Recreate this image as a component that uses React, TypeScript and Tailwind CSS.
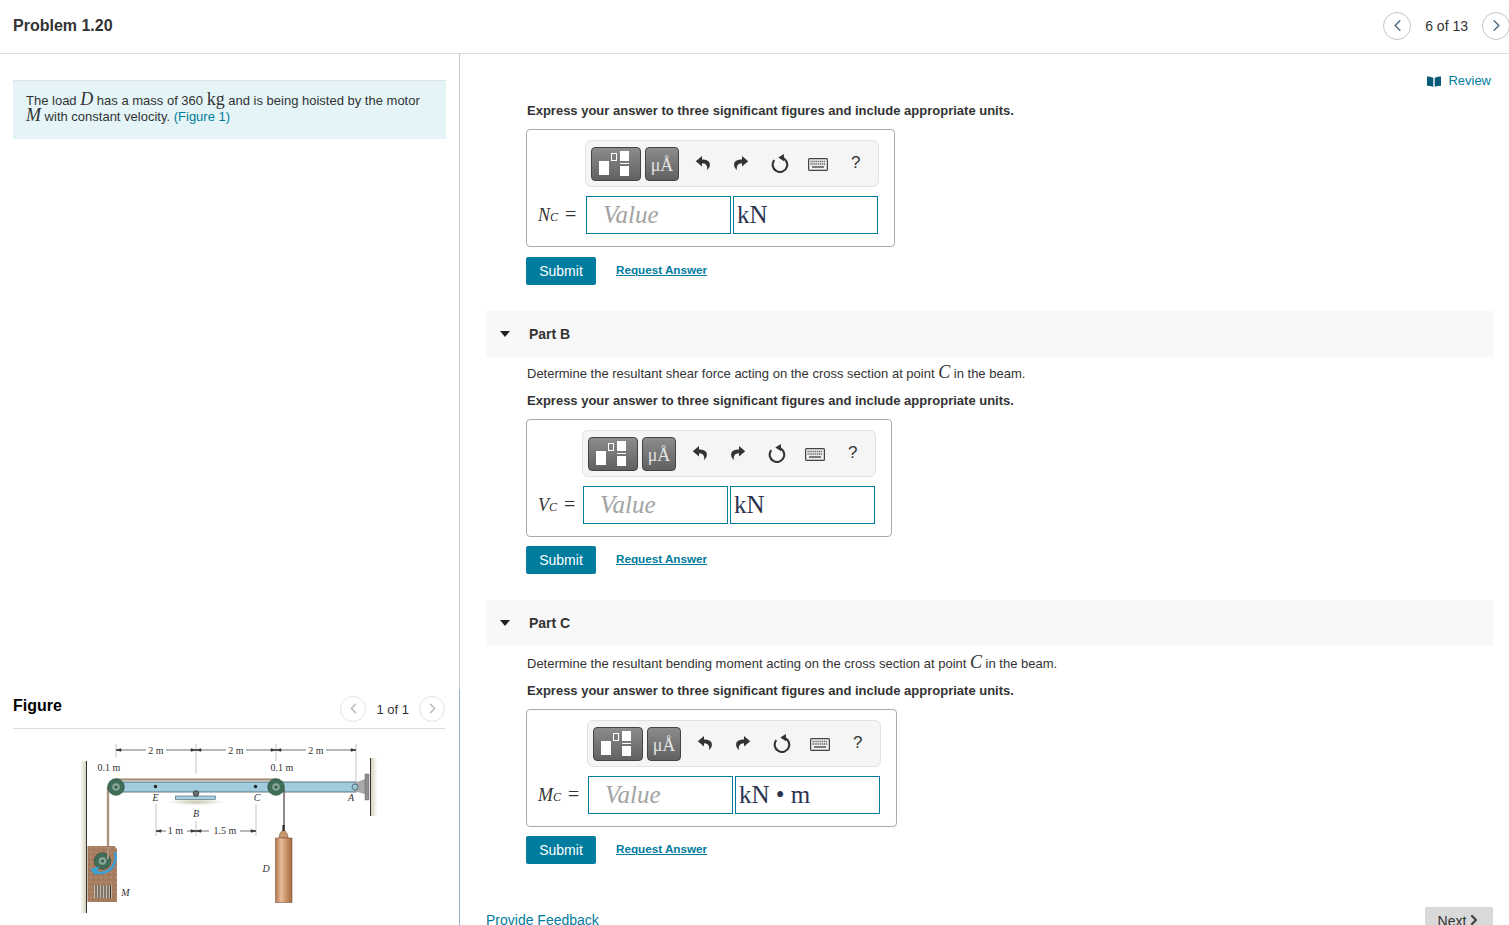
import { ChevronLeft, ChevronRight } from "lucide-react";

const serif = "font-['Liberation_Serif',serif]";

function CircleNav({ dir, faint }: { dir: "left" | "right"; faint?: boolean }) {
  const Icon = dir === "left" ? ChevronLeft : ChevronRight;
  if (faint) {
    return (
      <span className="flex h-[26px] w-[26px] shrink-0 items-center justify-center rounded-full border border-[#e3e3e3] bg-white text-[#b5b5b5]">
        <Icon size={17} strokeWidth={1.8} />
      </span>
    );
  }
  return (
    <span className="flex h-[28px] w-[28px] shrink-0 items-center justify-center rounded-full border border-[#c4c4c4] bg-white text-[#4d6a80]">
      <Icon size={19} strokeWidth={1.8} />
    </span>
  );
}

function ReplyArrow({ flip }: { flip?: boolean }) {
  return (
    <svg width="16" height="16" viewBox="0 0 16 16" className={`-mt-[2px] ${flip ? "-scale-x-100" : ""}`}>
      <path d="M7 1 .8 6.300 7 11.500V8.300c2.600 0 4.300.9 5 3.100.4 1.300.3 2.800-.2 3.800 2.300-1.900 3.500-4.100 3-6.500C14.300 5.900 11 4.600 7 4.600Z" fill="#333" />
    </svg>
  );
}

function ResetIcon() {
  return (
    <svg width="18" height="19" viewBox="0 0 16 17">
      <path d="M8.500 3.100A6.500 6.500 0 1 1 2.900 5.500" fill="none" stroke="#333" strokeWidth="1.900" />
      <path d="M6.500 3.200 11.500 0v6.400z" fill="#333" />
    </svg>
  );
}

function KeyboardIcon() {
  return (
    <svg width="20" height="13" viewBox="0 0 20 13" className="mt-[2px]">
      <rect x="0.6" y="0.6" width="18.800" height="11.800" rx="1" fill="#eee" stroke="#444" strokeWidth="1.200" />
      <path d="M2.500 3.500h15M2.500 6h15" stroke="#666" strokeWidth="1.300" strokeDasharray="1.200 .7" />
      <path d="M4 9h12" stroke="#555" strokeWidth="1.500" />
    </svg>
  );
}

function Toolbar() {
  return (
    <div className="flex h-[47px] w-[294px] items-center rounded-[6px] border border-[#e2e2e2] bg-[#f5f5f5] pl-[5px]">
      <span className="relative flex h-[34px] w-[50px] items-center rounded-[4px] border border-[#444] bg-gradient-to-b from-[#8c8c8c] to-[#616161]">
        <span className="absolute left-[7px] top-[13px] h-[14px] w-[10px] bg-white" />
        <span className="absolute left-[19px] top-[5px] h-[8px] w-[6px] border border-white" />
        <span className="absolute left-[28px] top-[3px] h-[10px] w-[9px] bg-white" />
        <span className="absolute left-[28px] top-[15px] h-[1px] w-[9px] bg-white" />
        <span className="absolute left-[28px] top-[18px] h-[10px] w-[9px] bg-white" />
      </span>
      <span className="ml-[4px] flex h-[34px] w-[34px] items-center justify-center rounded-[4px] border border-[#444] bg-gradient-to-b from-[#8c8c8c] to-[#616161] pt-[3px] font-['Liberation_Serif',serif] text-[18px] text-[#e4e4e4]">
        μÅ
      </span>
      <span className="ml-[16px] flex w-[16px] justify-center"><ReplyArrow /></span>
      <span className="ml-[22px] flex w-[16px] justify-center"><ReplyArrow flip /></span>
      <span className="ml-[21px] flex w-[20px] justify-center"><ResetIcon /></span>
      <span className="ml-[18px] flex w-[20px] justify-center"><KeyboardIcon /></span>
      <span className="ml-[23px] -mt-[1px] font-['Liberation_Sans',sans-serif] text-[17px] text-[#333]">?</span>
    </div>
  );
}

function AnswerBlock({ name, unit, boxClass, labelClass, labelWidth }: { name: string; unit: React.ReactNode; boxClass: string; labelClass: string; labelWidth: string }) {
  return (
    <div className={`h-[118px] rounded-[4px] border border-[#ababab] pl-[11px] pt-[10px] ${boxClass}`}>
      <div className={`flex ${labelClass}`}>
        <Toolbar />
      </div>
      <div className="mt-[9px] flex items-center">
        <span className={`${serif} flex shrink-0 items-baseline whitespace-nowrap text-[18px] text-[#333] ${labelWidth}`}>
          <i>{name}</i>
          <i className="text-[12px]">C</i>
          <span className="ml-[7px] text-[20px] leading-none">=</span>
        </span>
        <span className={`${serif} flex h-[38px] w-[145px] items-center border border-[#007c9e] pl-[16px] text-[25px] italic text-[#a3a3a3]`}>Value</span>
        <span className={`${serif} ml-[2px] flex h-[38px] w-[145px] items-center border border-[#007c9e] pl-[3px] text-[25px] text-[#2b3350]`}>{unit}</span>
      </div>
    </div>
  );
}

function Actions({ cls }: { cls: string }) {
  return (
    <div className={`flex h-[28px] items-center ${cls}`}>
      <span className="flex h-[28px] w-[70px] items-center justify-center rounded-[2px] bg-[#007c9e] text-[14px] text-white">Submit</span>
      <span className="ml-[20px] -mt-[2px] text-[11.700px] font-bold text-[#007c9e] underline">Request Answer</span>
    </div>
  );
}

function PartHeader({ title, cls }: { title: string; cls: string }) {
  return (
    <div className={`flex h-[46px] items-center bg-[#f8f8f8] ${cls}`}>
      <span className="ml-[14px] h-0 w-0 border-x-[5.500px] border-t-[6px] border-x-transparent border-t-[#222]" />
      <span className="ml-[19px] text-[14px] font-bold text-[#333]">{title}</span>
    </div>
  );
}

function BeamFigure() {
  const label = { fontFamily: "Liberation Serif, serif", fontSize: 10, fill: "#333", textAnchor: "middle" as const };
  const letter = { ...label, fontStyle: "italic", fontSize: 10 };
  return (
    <svg width="320" height="180" viewBox="70 738 320 180" className="ml-[70px] mt-[10px] block">
      <defs>
        <linearGradient id="copper" x1="0" x2="1" y1="0" y2="0">
          <stop offset="0" stopColor="#b5784f" />
          <stop offset="0.35" stopColor="#e6bc9c" />
          <stop offset="0.7" stopColor="#c48a5f" />
          <stop offset="1" stopColor="#a66a42" />
        </linearGradient>
        <linearGradient id="wallL" x1="0" x2="1" y1="0" y2="0">
          <stop offset="0" stopColor="#fff" />
          <stop offset="1" stopColor="#d2d0b8" />
        </linearGradient>
        <linearGradient id="wallR" x1="0" x2="1" y1="0" y2="0">
          <stop offset="0" stopColor="#d2d0b8" />
          <stop offset="1" stopColor="#fff" />
        </linearGradient>
        <radialGradient id="shadow">
          <stop offset="0" stopColor="#c9c7ae" />
          <stop offset="1" stopColor="#fff" />
        </radialGradient>
        <pattern id="speckle" width="5" height="5" patternUnits="userSpaceOnUse">
          <rect width="5" height="5" fill="#a67d5f" />
          <circle cx="1" cy="1.500" r="0.6" fill="#c9a88d" />
          <circle cx="3.500" cy="3.500" r="0.5" fill="#8a6448" />
        </pattern>
      </defs>

      {/* walls */}
      <rect x="80" y="760" width="6.500" height="152" fill="url(#wallL)" />
      <path d="M86.500 760v152" stroke="#333" strokeWidth="1" />
      <rect x="370.500" y="757" width="7" height="58" fill="url(#wallR)" />
      <path d="M370.500 757v58" stroke="#333" strokeWidth="1" />

      {/* dimension ticks */}
      <g stroke="#c4c4c4" strokeWidth="1">
        <path d="M196 743v30M276 743v17M356 743v42M156 803v32M196 820v15M256 803v32M116 743v13" />
      </g>
      <g stroke="#333" strokeWidth="0.7" fill="none">
        <path d="M116 749h30M166 749h60M246 749h60M326 749h30M156 830h10M187 830h22M240 830h16" />
        <path d="M116 749l5-1.200v2.400zM196 749l-5-1.200v2.400zM196 749l5-1.200v2.400zM276 749l-5-1.200v2.400zM276 749l5-1.200v2.400zM356 749l-5-1.200v2.400zM156 830l5-1.200v2.400zM196 830l-5-1.200v2.400zM196 830l5-1.200v2.400zM256 830l-5-1.200v2.400z" fill="#333" />
      </g>
      <text x="156" y="752.500" {...label}>2 m</text>
      <text x="236" y="752.500" {...label}>2 m</text>
      <text x="316" y="752.500" {...label}>2 m</text>
      <text x="109" y="770" {...label}>0.1 m</text>
      <text x="282" y="770" {...label}>0.1 m</text>
      <text x="175.500" y="832.500" {...label}>1 m</text>
      <text x="225" y="832.500" {...label}>1.5 m</text>

      {/* beam and rope */}
      <rect x="116" y="781" width="240" height="10" fill="#a0ccde" stroke="#3f5a68" strokeWidth="0.8" />
      <path d="M116 778.500h160" stroke="#9a8672" strokeWidth="2" />
      <path d="M108 786v60" stroke="#a8957f" strokeWidth="2.400" />
      <path d="M284 788v42" stroke="#5f5a50" strokeWidth="1.400" />
      <circle cx="155.500" cy="785.500" r="1.700" fill="#222" />
      <circle cx="255.500" cy="785.500" r="1.700" fill="#222" />

      {/* support B */}
      <ellipse cx="196" cy="801" rx="29" ry="3.500" fill="url(#shadow)" />
      <rect x="175.500" y="795" width="40" height="3.500" fill="#a6cfe0" stroke="#44606e" strokeWidth="0.6" />
      <circle cx="196" cy="792.500" r="2.800" fill="#6b7070" stroke="#222" strokeWidth="0.7" />

      {/* bracket A */}
      <path d="M354 782l14-5v17l-14-4z" fill="#a9a9a9" />
      <rect x="365" y="773" width="4" height="26" fill="#8e8e8e" stroke="#555" strokeWidth="0.4" />
      <circle cx="355" cy="786" r="3" fill="#9fc4d2" stroke="#45606e" strokeWidth="0.8" />

      {/* motor */}
      <path d="M87.500 845h27l2.500 3v53h-29.500z" fill="url(#speckle)" />

      {/* pulleys */}
      {[
        [116, 786],
        [276, 786],
        [102.500, 860],
      ].map(([cx, cy]) => (
        <g key={cx}>
          <circle cx={cx} cy={cy} r="8.300" fill="#3f6e58" stroke="#2b4a3b" strokeWidth="0.7" />
          <circle cx={cx} cy={cy} r="3.800" fill="#8aa69a" />
          <circle cx={cx} cy={cy} r="1.600" fill="#355b49" />
        </g>
      ))}

      <path d="M108 846v12" stroke="#a8957f" strokeWidth="2" />
      <path d="M115 851c2.500 10-3 21-15 21-2.500 0-5-1-6.500-2" fill="none" stroke="#3aa0d8" strokeWidth="2.500" />
      <path d="M90 868l9-2.500-3 9z" fill="#3aa0d8" />
      <rect x="94" y="884" width="18" height="13" fill="#c7b9a6" />
      <path d="M96 884v13M99 884v13M102 884v13M105 884v13M108 884v13M110.500 884v13" stroke="#3a332c" strokeWidth="1" />

      {/* weight D */}
      <path d="M279 837c0-4 2-7 4.500-8 2.500 1 4.500 4 4.500 8z" fill="#c8976f" stroke="#7d573c" strokeWidth="0.6" />
      <path d="M283.500 824v6" stroke="#222" strokeWidth="2" />
      <rect x="275.500" y="837" width="16.500" height="64.500" fill="url(#copper)" stroke="#7d573c" strokeWidth="0.6" />

      <text x="155.500" y="800" {...letter}>E</text>
      <text x="257" y="800" {...letter}>C</text>
      <text x="196" y="816" {...letter}>B</text>
      <text x="351" y="800" {...letter}>A</text>
      <text x="266" y="871" {...letter}>D</text>
      <text x="125.500" y="895" {...letter}>M</text>
    </svg>
  );
}

export default function App() {
  return (
    <div className="h-[925px] overflow-hidden bg-white font-['Liberation_Sans',Arial,sans-serif] text-[#333]">
      <header className="flex h-[54px] items-center justify-between border-b border-[#dcdcdc] pb-[2px] pl-[13px]">
        <h1 className="text-[16px] font-bold text-[#333]">Problem 1.20</h1>
        <div className="-mr-px flex items-center">
          <CircleNav dir="left" />
          <span className="mx-[14px] mt-[2px] text-[14px] text-[#333]">6 of 13</span>
          <CircleNav dir="right" />
        </div>
      </header>

      <div className="flex">
        <aside className="w-[460px] shrink-0">
          <div className="h-[636px] border-r border-[#c9c9c9] pl-[13px] pr-[13px] pt-[26px]">
            <div className="h-[59px] w-[433px] border-t border-[#dde3e6] bg-[#e5f5f7] px-[13px] pt-[12px] text-[13px] leading-[16px] text-[#333]">
              The load <i className={`${serif} text-[18px] leading-[0]`}>D</i> has a mass of 360 <span className={`${serif} text-[18px] leading-[0]`}>kg</span> and is being hoisted by the motor
              <br />
              <i className={`${serif} text-[18px] leading-[0]`}>M</i> with constant velocity. <span className="text-[#007c9e]">(Figure 1)</span>
            </div>
          </div>
          <div className="h-[235px] border-r border-[#8fb2c9] pt-[5px]">
            <div className="mx-[13px] flex h-[34px] w-[432px] items-center justify-between border-b border-[#dcdcdc] pb-[6px]">
              <span className="-mt-[6px] text-[16px] font-bold text-black">Figure</span>
              <div className="flex items-center">
                <CircleNav dir="left" faint />
                <span className="mx-[10px] mt-[2px] text-[13px] text-[#333]">1 of 1</span>
                <CircleNav dir="right" faint />
              </div>
            </div>
            <BeamFigure />
          </div>
        </aside>

        <main className="min-w-0 flex-1 pl-[26px] pr-[16px] text-[13px]">
          <div className="mt-[17px] flex h-[20px] items-center justify-end pr-[2px] text-[#007c9e]">
            <svg width="14" height="11" viewBox="0 0 14 11" className="mr-[7px]">
              <path d="M0 .5c2 0 4 .3 6.300 1.200v9C4 10 2 9.700 0 9.700zM14 .5c-2 0-4 .3-6.300 1.200v9c2.300-.7 4.300-1 6.300-1z" fill="#075a78" />
            </svg>
            Review
          </div>

          <div className="pl-[41px]">
            <p className="mt-[10px] h-[20px] font-bold leading-[20px]">Express your answer to three significant figures and include appropriate units.</p>
            <div className="-ml-px mt-[8px]">
              <AnswerBlock name="N" unit="kN" boxClass="w-[369px]" labelClass="pl-[47px]" labelWidth="w-[48px]" />
            </div>
            <Actions cls="-ml-px mt-[10px]" />
          </div>

          <PartHeader title="Part B" cls="mt-[26px]" />
          <div className="pl-[41px]">
            <p className="mt-[7px] h-[20px] leading-[20px]">Determine the resultant shear force acting on the cross section at point <i className={`${serif} text-[18px] leading-[0]`}>C</i> in the beam.</p>
            <p className="mt-[7px] h-[20px] font-bold leading-[20px]">Express your answer to three significant figures and include appropriate units.</p>
            <div className="-ml-px mt-[8px]">
              <AnswerBlock name="V" unit="kN" boxClass="w-[366px]" labelClass="pl-[44px]" labelWidth="w-[45px]" />
            </div>
            <Actions cls="-ml-px mt-[9px]" />
          </div>

          <PartHeader title="Part C" cls="mt-[26px]" />
          <div className="pl-[41px]">
            <p className="mt-[8px] h-[20px] leading-[20px]">Determine the resultant bending moment acting on the cross section at point <i className={`${serif} text-[18px] leading-[0]`}>C</i> in the beam.</p>
            <p className="mt-[7px] h-[20px] font-bold leading-[20px]">Express your answer to three significant figures and include appropriate units.</p>
            <div className="-ml-px mt-[8px]">
              <AnswerBlock name="M" unit={<>kN • m</>} boxClass="w-[371px]" labelClass="pl-[49px]" labelWidth="w-[50px]" />
            </div>
            <Actions cls="-ml-px mt-[9px]" />
          </div>

          <div className="mt-[43px] flex items-start justify-between">
            <span className="mt-[3px] text-[14px] text-[#007c9e]">Provide Feedback</span>
            <span className="flex h-[30px] w-[68px] items-start justify-center rounded-t-[2px] bg-[#d9d9d9] pl-[2px] pt-[4px] text-[14px] text-[#333]">
              Next<ChevronRight size={16} strokeWidth={3.500} className="mt-[1px] text-[#444]" />
            </span>
          </div>
        </main>
      </div>
    </div>
  );
}
